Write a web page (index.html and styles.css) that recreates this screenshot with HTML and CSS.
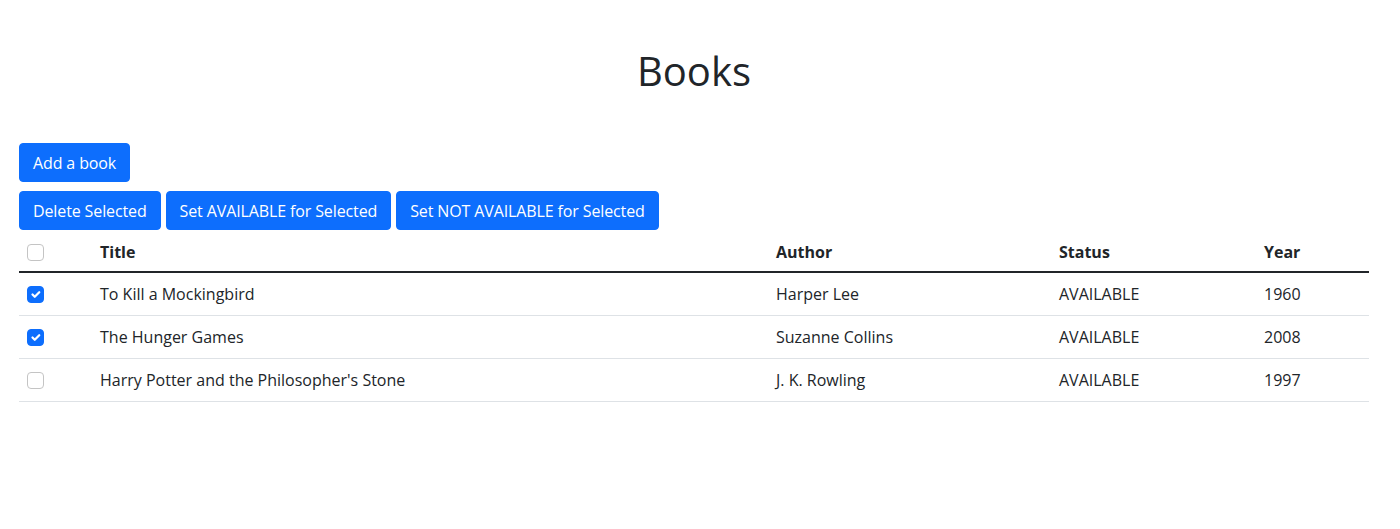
FILE: index.html
```html
<!doctype html>
<html>
<head>
	<meta name="viewport" content="width=device-width, initial-scale=1.0">
	<title>Books</title>

	<link rel="stylesheet" href="styles.css">

</head>

<body>

	<div class="container">
		<h1>Books</h1>

		<div class="actions">
			<div class="btn-row">
				<button class="btn">Add a book</button>
			</div>
			<div class="btn-row">
				<button class="btn">Delete Selected</button>
				<button class="btn">Set AVAILABLE for Selected</button>
				<button class="btn">Set NOT AVAILABLE for Selected</button>
			</div>
		</div>

		<table class="books">
			<colgroup>
				<col class="c-check">
				<col class="c-title">
				<col class="c-author">
				<col class="c-status">
				<col class="c-year">
			</colgroup>
			<thead>
				<tr>
					<th><span class="check"></span></th>
					<th>Title</th>
					<th>Author</th>
					<th>Status</th>
					<th>Year</th>
				</tr>
			</thead>
			<tbody>
				<tr>
					<td><span class="check checked"><svg viewBox="0 0 20 20"><path d="M6 10l3 3l6-6"/></svg></span></td>
					<td>To Kill a Mockingbird</td>
					<td>Harper Lee</td>
					<td>AVAILABLE</td>
					<td>1960</td>
				</tr>
				<tr>
					<td><span class="check checked"><svg viewBox="0 0 20 20"><path d="M6 10l3 3l6-6"/></svg></span></td>
					<td>The Hunger Games</td>
					<td>Suzanne Collins</td>
					<td>AVAILABLE</td>
					<td>2008</td>
				</tr>
				<tr>
					<td><span class="check"></span></td>
					<td>Harry Potter and the Philosopher's Stone</td>
					<td>J. K. Rowling</td>
					<td>AVAILABLE</td>
					<td>1997</td>
				</tr>
			</tbody>
		</table>
	</div>

</body>
</html>
```
FILE: styles.css
```css
body {
	background: #fff;
	font-family: "Open Sans", "Noto Sans", sans-serif;
	font-size: 16px;
	line-height: 1.5;
	color: #212529;
	margin: 0;
}
* {
	box-sizing: border-box;
}
.container {
	padding-left: 19px;
	padding-right: 31px;
}
h1 {
	text-align: center;
	font-size: 40px;
	font-weight: 400;
	line-height: 1.2;
	margin: 47px 0 48px 0;
}

.actions {
	display: flex;
	flex-direction: column;
	gap: 9px;
}
.btn-row {
	display: flex;
	gap: 5px;
}
.btn {
	font-family: inherit;
	font-size: 16px;
	letter-spacing: -0.12px;
	line-height: 24px;
	padding: 7px 13px 6px 13px;
	color: #fff;
	background: #0d6efd;
	border: 1px solid #0d6efd;
	border-radius: 4px;
	cursor: pointer;
}

.books {
	width: 100%;
	table-layout: fixed;
	border-collapse: collapse;
}
.c-check { width: 73px; }
.c-title { width: 676px; }
.c-author { width: 283px; }
.c-status { width: 205px; }
.c-year { width: 113px; }

.books th,
.books td {
	text-align: left;
	padding: 9px 8px;
	line-height: 24px;
	vertical-align: middle;
}
.books th {
	padding-top: 10px;
	padding-bottom: 7px;
	font-weight: 700;
	border-bottom: 2px solid #212529;
}
.books td {
	border-bottom: 1px solid #dee2e6;
}

.check {
	display: block;
	width: 17px;
	height: 17px;
	border: 1px solid #c4c4c4;
	border-radius: 4px;
	background: #fff;
}
.check.checked {
	background: #0d6efd;
	border-color: #0d6efd;
}
.check svg {
	display: block;
	width: 100%;
	height: 100%;
	fill: none;
	stroke: #fff;
	stroke-width: 3;
	stroke-linecap: round;
	stroke-linejoin: round;
}
```
